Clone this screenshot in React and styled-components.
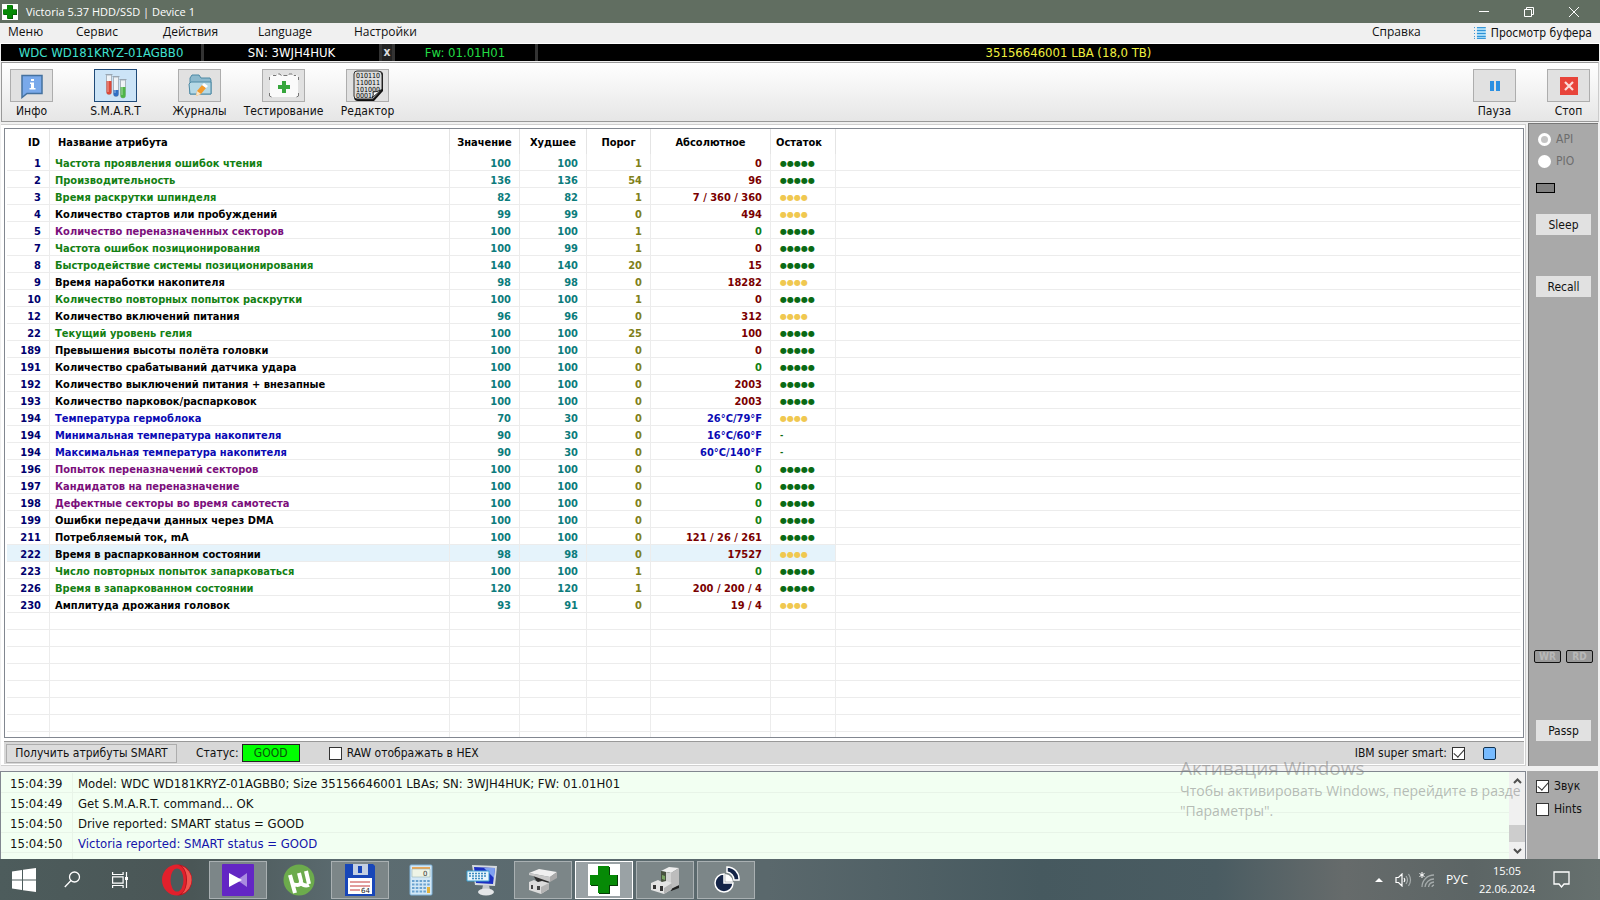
import React, { useState } from 'react'
import styled, { createGlobalStyle } from 'styled-components'

const GlobalStyle = createGlobalStyle`
  * {
    box-sizing: border-box;
  }

  html, body, #root {
    height: 100%;
    margin: 0;
  }

  body, button, input {
    font-family: "DejaVu Sans Condensed", "DejaVu Sans", sans-serif;
    font-size: 12px;
    color: #111;
  }

  body {
    background: #f0f0f0;
    overflow: hidden;
  }

  button {
    padding: 0;
    white-space: nowrap;
  }
`

const systemFont = '"Open Sans", "Noto Sans", sans-serif'

// Window frame
const Desktop = styled.div`
  position: relative;
  height: 100vh;
  display: flex;
  flex-direction: column;
`

const TitleBar = styled.header`
  height: 23px;
  flex: none;
  display: flex;
  align-items: center;
  padding: 0 4px 0 2px;
  background: #616e61;
  color: #fff;
  font-family: ${systemFont};
`

const Title = styled.h1`
  flex: 1;
  margin: 0;
  padding-left: 8px;
  font-size: 11px;
  font-weight: 400;
`

const WindowButton = styled.button`
  width: 45px;
  height: 23px;
  display: flex;
  align-items: center;
  justify-content: center;
  border: 0;
  background: none;
`

const MenuBar = styled.nav`
  height: 21px;
  flex: none;
  display: flex;
  align-items: flex-start;
  padding: 0 8px;
  background: #f0f0f0;
  border-bottom: 1px solid #fff;
`

const MenuItem = styled.button`
  width: ${props => props.$width}px;
  height: ${props => (props.$plain ? 20 : 17)}px;
  flex: none;
  border: 0;
  background: none;
  text-align: left;
  font-family: ${props => (props.$plain ? 'inherit' : systemFont)};
  display: flex;
  align-items: center;
  gap: 5px;
`

const Spacer = styled.div`
  flex: 1;
`

// Drive passport line
const DriveBar = styled.div`
  height: 17px;
  flex: none;
  display: flex;
  margin: 0 1px;
  background: #000;
`

const DriveCell = styled.div`
  width: ${props => (props.$width ? `${props.$width}px` : 'auto')};
  flex: ${props => (props.$width ? 'none' : 1)};
  border-right: ${props => (props.$last ? 0 : 3)}px solid #333;
  color: ${props => props.$color};
  font-size: 13px;
  line-height: 18px;
  text-align: center;
  white-space: nowrap;
`

const ClearSerial = styled.button`
  width: 100%;
  height: 17px;
  display: block;
  border: 0;
  background: #222;
  color: #ddd;
  font-weight: 700;
  line-height: 17px;
`

// Toolbar
const Toolbar = styled.div`
  height: 60px;
  flex: none;
  display: flex;
  margin: 1px 1px 0;
  padding: 6px 8px 0;
  border: 1px solid #999;
  border-right-color: #ccc;
  background: linear-gradient(#fff, #e6e6e6);
`

const ToolGroup = styled.div`
  display: flex;
  gap: ${props => props.$gap}px;
`

const ToolItem = styled.label`
  width: 43px;
  display: flex;
  flex-direction: column;
  align-items: center;
  white-space: nowrap;
  line-height: 18px;
`

const ToolButton = styled.button`
  width: 43px;
  height: 33px;
  flex: none;
  display: flex;
  align-items: center;
  justify-content: center;
  border: 1px solid ${props => (props.$active ? '#1f4a78' : '#adadad')};
  background: ${props => (props.$active ? '#cce4f7' : '#e1e1e1')};
`

// Main area
const Main = styled.main`
  flex: 1;
  min-height: 0;
  display: flex;
  padding-right: 2px;
`

const Content = styled.section`
  flex: 1;
  min-width: 0;
  display: flex;
  flex-direction: column;
  margin: 2px 2px 0 1px;
  padding: 3px 1px 1px 3px;
  border: 1px solid #d0d0d0;
  border-width: 1px 1px 1px 0;
  background: #fff;
`

const TableBox = styled.div`
  flex: 1;
  min-height: 0;
  overflow: hidden;
  padding: 0 2px;
  border: 1px solid #828790;
  background: #fff;
`

const AttrTable = styled.table`
  width: 100%;
  table-layout: fixed;
  border-collapse: separate;
  border-spacing: 0;
  font-size: 11px;
  font-weight: 700;
`

const headPadding = {
  right: '2px 9px 0 0',
  left: '2px 0 0 8px',
  near: '2px 0 0 5px',
}

const HeadCell = styled.th`
  height: 25px;
  padding: ${props => headPadding[props.$align] || '2px 0 0'};
  border-right: 1px solid ${props => (props.$blank ? 'transparent' : '#e4e4e4')};
  color: #000;
  text-align: ${props => (props.$align === 'near' ? 'left' : props.$align || 'center')};
`

const Row = styled.tr`
  td:not(:last-child) {
    background: ${props => (props.$selected ? '#e5f3fb' : 'transparent')};
  }
`

const Cell = styled.td`
  height: 17px;
  padding: ${props => (props.$left ? '3px 0 0 5px' : '3px 8px 0 0')};
  border-right: 1px solid ${props => (props.$blank ? 'transparent' : '#ececec')};
  border-bottom: 1px solid #ececec;
  color: ${props => props.$color};
  line-height: 13px;
  text-align: ${props => (props.$left ? 'left' : 'right')};
  white-space: nowrap;
`

const HealthCell = styled(Cell)`
  padding: 2px 0 0 9px;
  text-align: left;
  font-family: "DejaVu Sans", sans-serif;
  font-size: 8px;
`

const SmartBar = styled.div`
  height: 23px;
  flex: none;
  display: flex;
  align-items: center;
  margin-top: 3px;
  padding: 0 28px 0 2px;
  border-top: 1px solid #999;
  background: #d8d8d8;
`

const GetButton = styled.button`
  width: 171px;
  height: 19px;
  margin-right: 19px;
  border: 1px solid #adadad;
  background: #dcdcdc;
`

const Status = styled.output`
  width: 58px;
  height: 18px;
  margin: 0 29px 0 3px;
  border: 1px solid #222;
  background: #0f0;
  color: #0a500a;
  line-height: 17px;
  text-align: center;
`

const CheckLabel = styled.label`
  display: flex;
  align-items: center;
  gap: 5px;
  color: #111;
  white-space: nowrap;
`

const CheckBox = styled.input.attrs({ type: 'checkbox' })`
  appearance: none;
  width: 13px;
  height: 13px;
  flex: none;
  display: grid;
  place-items: center;
  margin: 0;
  border: 1px solid #333;
  background: #fff;

  &:checked::before {
    content: '';
    width: 9px;
    height: 5px;
    border: solid #333;
    border-width: 0 0 1px 1px;
    transform: translateY(-1px) rotate(-48deg);
  }
`

const BlueLamp = styled.span`
  width: 13px;
  height: 13px;
  margin-left: 18px;
  border: 1px solid #12324f;
  border-radius: 2px;
  background: #77bbff;
`

// Right side panel
const Side = styled.aside`
  width: 70px;
  flex: none;
  display: flex;
  flex-direction: column;
  align-items: flex-start;
  margin-top: 1px;
  padding: 4px 6px 25px 7px;
  border-left: 1px solid #777;
  border-top: 1px solid #777;
  background: #a9a9a9;
`

const RadioLabel = styled.label`
  height: 22px;
  display: flex;
  align-items: center;
  gap: 5px;
  padding-left: 2px;
  color: #6d6d6d;
`

const Radio = styled.input.attrs({ type: 'radio' })`
  appearance: none;
  width: 13px;
  height: 13px;
  margin: 0;
  border: 3px solid #fff;
  border-radius: 50%;
  background: #fff;

  &:checked {
    background: #c4c4c4;
  }
`

const Led = styled.span`
  width: 19px;
  height: 10px;
  margin: 11px 0 21px;
  border: 1px solid #000;
  background: #808080;
`

const SideButton = styled.button`
  width: 55px;
  height: 21px;
  flex: none;
  margin-bottom: ${props => props.$gap || 0}px;
  border: 0;
  background: #e1e1e1;
`

const PortLamps = styled.div`
  display: flex;
  gap: 5px;
  margin: auto 0 57px -2px;
`

const PortLamp = styled.span`
  width: 27px;
  height: 13px;
  border: 1px solid #111;
  border-radius: 2px;
  background: #999;
  color: #b8b8b8;
  font-size: 10px;
  font-weight: 700;
  line-height: 12px;
  text-align: center;
`

// Log
const LogArea = styled.section`
  height: 88px;
  flex: none;
  display: flex;
  margin-top: 5px;
  padding-right: 2px;
`

const LogBox = styled.div`
  flex: 1;
  min-width: 0;
  display: flex;
  margin-right: 1px;
  border: 1px solid #828790;
  border-bottom: 0;
  background: #f2fff2;
`

const LogTable = styled.table`
  flex: 1;
  display: block;
  height: 87px;
  overflow: hidden;
  padding-top: 1px;
  border-spacing: 0;
  font-size: 13px;

  tbody {
    display: block;
  }

  tr {
    display: flex;
    height: 20px;
    border-bottom: 1px solid #e8f4e8;
  }
`

const LogTime = styled.td`
  width: 72px;
  padding: 2px 0 0 9px;
  border-right: 1px solid #e8f4e8;
  line-height: 18px;
`

const LogText = styled.td`
  flex: 1;
  padding: 2px 0 0 5px;
  color: ${props => props.$color || '#111'};
  line-height: 18px;
`

const ScrollBar = styled.div`
  width: 16px;
  display: flex;
  flex-direction: column;
  background: #f0f0f0;
`

const ScrollButton = styled.button`
  height: 17px;
  display: grid;
  place-items: center;
  border: 0;
  background: none;
`

const ScrollThumb = styled.div`
  height: 17px;
  margin-top: auto;
  background: #cdcdcd;
`

const LogSide = styled.div`
  width: 71px;
  display: flex;
  flex-direction: column;
  gap: 9px;
  padding: 8px 0 0 9px;
  background: #a9a9a9;
`

const Watermark = styled.div`
  position: absolute;
  right: 75px;
  bottom: 79px;
  width: 345px;
  overflow: hidden;
  color: rgba(120, 120, 120, 0.5);
  font-family: ${systemFont};
  font-size: 14px;
  line-height: 20px;
  white-space: nowrap;
  pointer-events: none;
`

const WatermarkTitle = styled.div`
  font-size: 19px;
  line-height: 26px;
`

// Taskbar
const TaskBar = styled.footer`
  height: 41px;
  flex: none;
  display: flex;
  align-items: center;
  background: linear-gradient(90deg, #4d5c5c, #4a5656 12%, #5c6c71 22%, #5a686c 48%, #46595f 65%, #4a5c62 76%, #666b6b 84%, #5c6565 92%, #66706e);
  color: #fff;
  font-family: ${systemFont};
`

const SystemButton = styled.button`
  width: ${props => props.$width}px;
  height: 41px;
  display: grid;
  place-items: center;
  border: 0;
  background: none;
  color: #fff;
  font-family: inherit;
  font-size: ${props => (props.$small ? 11 : 12)}px;
  line-height: 18px;
  white-space: pre;
`

const Apps = styled.div`
  flex: 1;
  display: flex;
  gap: 3px;
  padding-left: 4px;
`

const AppButton = styled.button`
  width: 58px;
  height: 38px;
  display: grid;
  place-items: center;
  border: 1px solid ${props => (props.$active ? '#fff' : props.$open ? '#a9b0b2' : 'transparent')};
  background: ${props => (props.$active ? '#9aa2a5' : props.$open ? '#7c8688' : 'none')};
`

const tools = [
  { id: 'info', label: 'Инфо' },
  { id: 'smart', label: 'S.M.A.R.T' },
  { id: 'logs', label: 'Журналы' },
  { id: 'test', label: 'Тестирование' },
  { id: 'editor', label: 'Редактор' },
]

const colors = {
  green: '#138013',
  black: '#000',
  purple: '#7b0f7b',
  blue: '#0a0ab4',
  red: '#7a0000',
}

// id, name, name color, value, worst, threshold, raw, raw color, health
const attributes = [
  [1, 'Частота проявления ошибок чтения', 'green', 100, 100, 1, '0', 'red', 5],
  [2, 'Производительность', 'green', 136, 136, 54, '96', 'red', 5],
  [3, 'Время раскрутки шпинделя', 'green', 82, 82, 1, '7 / 360 / 360', 'red', 4],
  [4, 'Количество стартов или пробуждений', 'black', 99, 99, 0, '494', 'red', 4],
  [5, 'Количество переназначенных секторов', 'purple', 100, 100, 1, '0', 'green', 5],
  [7, 'Частота ошибок позиционирования', 'green', 100, 99, 1, '0', 'red', 5],
  [8, 'Быстродействие системы позиционирования', 'green', 140, 140, 20, '15', 'red', 5],
  [9, 'Время наработки накопителя', 'black', 98, 98, 0, '18282', 'red', 4],
  [10, 'Количество повторных попыток раскрутки', 'green', 100, 100, 1, '0', 'red', 5],
  [12, 'Количество включений питания', 'black', 96, 96, 0, '312', 'red', 4],
  [22, 'Текущий уровень гелия', 'green', 100, 100, 25, '100', 'red', 5],
  [189, 'Превышения высоты полёта головки', 'black', 100, 100, 0, '0', 'red', 5],
  [191, 'Количество срабатываний датчика удара', 'black', 100, 100, 0, '0', 'green', 5],
  [192, 'Количество выключений питания + внезапные', 'black', 100, 100, 0, '2003', 'red', 5],
  [193, 'Количество парковок/распарковок', 'black', 100, 100, 0, '2003', 'red', 5],
  [194, 'Температура гермоблока', 'blue', 70, 30, 0, '26°C/79°F', 'blue', 4],
  [194, 'Минимальная температура накопителя', 'blue', 90, 30, 0, '16°C/60°F', 'blue', 0],
  [194, 'Максимальная температура накопителя', 'blue', 90, 30, 0, '60°C/140°F', 'blue', 0],
  [196, 'Попыток переназначений секторов', 'purple', 100, 100, 0, '0', 'green', 5],
  [197, 'Кандидатов на переназначение', 'purple', 100, 100, 0, '0', 'green', 5],
  [198, 'Дефектные секторы во время самотеста', 'purple', 100, 100, 0, '0', 'green', 5],
  [199, 'Ошибки передачи данных через DMA', 'black', 100, 100, 0, '0', 'green', 5],
  [211, 'Потребляемый ток, mA', 'black', 100, 100, 0, '121 / 26 / 261', 'red', 5],
  [222, 'Время в распаркованном состоянии', 'black', 98, 98, 0, '17527', 'red', 4],
  [223, 'Число повторных попыток запарковаться', 'green', 100, 100, 1, '0', 'green', 5],
  [226, 'Время в запаркованном состоянии', 'green', 120, 120, 1, '200 / 200 / 4', 'red', 5],
  [230, 'Амплитуда дрожания головок', 'black', 93, 91, 0, '19 / 4', 'red', 4],
]

const log = [
  { time: '15:04:39', text: 'Model: WDC WD181KRYZ-01AGBB0; Size 35156646001 LBAs; SN: 3WJH4HUK; FW: 01.01H01' },
  { time: '15:04:49', text: 'Get S.M.A.R.T. command... OK' },
  { time: '15:04:50', text: 'Drive reported: SMART status = GOOD' },
  { time: '15:04:50', text: 'Victoria reported: SMART status = GOOD', color: '#1414aa' },
]

const CrossIcon = ({ size }) => (
  <svg width={size} height={size} viewBox="0 0 32 32">
    <path fill="#fff" d="M0 0h32v32H0z" />
    <path fill="#063b06" d="M11 3h11v8h8v11h-8v8H11v-8H3V11h8z" />
    <path fill="#068a06" d="M10 2h11v9h8v10h-8v8H10v-8H2V11h8z" />
  </svg>
)

const ToolIcon = ({ id }) => {
  switch (id) {
    case 'info':
      return (
        <svg width="24" height="26" viewBox="0 0 24 26">
          <path d="M2 2.500h20v18H7l-5 4z" fill="#79a9ea" stroke="#44719f" strokeWidth="1.500" />
          <path d="M11 6h3v2h-3zM10 9.500h4V15h1.500v1.500H9.500V15H11v-4h-1z" fill="#fff" />
        </svg>
      )
    case 'smart':
      return (
        <svg width="24" height="28" viewBox="0 0 24 28">
          <path d="M2.500 3v17a2.500 2.500 0 005 0V3z" fill="#eef2f6" stroke="#a9b4be" />
          <path d="M2.500 9h5v11a2.500 2.500 0 01-5 0z" fill="#dc4a3a" />
          <path d="M9.500 5v17a2.500 2.500 0 005 0V5z" fill="#eef2f6" stroke="#a9b4be" />
          <path d="M9.500 18h5v4a2.500 2.500 0 01-5 0z" fill="#2f6fc4" />
          <path d="M16.500 8v15.500a2.500 2.500 0 005 0V8z" fill="#eef2f6" stroke="#a9b4be" />
          <path d="M16.500 15h5v8.500a2.500 2.500 0 01-5 0z" fill="#4fb548" />
          <path d="M1.500 2.500h7M8.500 4.500h7M15.500 7.500h7" stroke="#99a6b2" />
          <path d="M4 5v15M11 7v14M18 10v13" stroke="#fff" strokeOpacity="0.500" />
        </svg>
      )
    case 'logs':
      return (
        <svg width="26" height="26" viewBox="0 0 26 26">
          <path d="M3 21V5l2-3h7l2 3h9l1 2v14z" fill="#8db9cd" stroke="#4d89a4" />
          <path d="M3 21l-1-10 2-2h20v12z" fill="#b6d9e6" stroke="#4d89a4" />
          <path d="M9 23l1-5 5-6 4 3-5 6z" fill="#f39a2c" />
          <path d="M9 23l1-5 4 3z" fill="#f7e5c8" />
          <path d="M15 12l2-2 4 3-2 2z" fill="#fff" />
        </svg>
      )
    case 'test':
      return (
        <svg width="32" height="28" viewBox="0 0 32 28">
          <path d="M2 5q0-2 2-2h3l1-1h3l1 1h9l1-1h3l1 1h2q2 0 2 2v18q0 2-2 2H4q-2 0-2-2z" fill="#fafafa" />
          <path d="M5 3.500h3l1-1.500h3l1 1.500h7L21 2h3l1 1.500h3" stroke="#777" strokeDasharray="4 2" fill="none" />
          <path d="M1.500 8V5M30.500 8V5M1.500 21v3l2 1M30.500 21v3l-2 1" stroke="#777" fill="none" />
          <path d="M14 9h4v4h4v4h-4v4h-4v-4h-4v-4h4z" fill="#36a63c" />
        </svg>
      )
    default:
      return (
        <svg width="32" height="32" viewBox="0 0 32 32">
          <path d="M5 1h22q4 0 4 4v16l-9 10H6q-4 0-4-4V4z" fill="#111" />
          <path d="M5 1h21q4 0 4 4v14l-9 10H5q-3 0-3-3V4q0-3 3-3z" fill="#dcdcdc" stroke="#333" />
          <g fontFamily="DejaVu Sans Condensed" fontSize="7" fill="#000">
            <text x="4" y="8">010110</text>
            <text x="4" y="15">110011</text>
            <text x="4" y="22">101000</text>
            <text x="4" y="28">0001</text>
          </g>
          <path d="M20 28q2-3 1-6 4 0 8-2z" fill="#fff" stroke="#222" />
        </svg>
      )
  }
}

const PauseIcon = () => (
  <svg width="12" height="12" viewBox="0 0 12 12">
    <path d="M1 1h4v10H1zM7 1h4v10H7z" fill="#2b90e2" />
  </svg>
)

const StopIcon = () => (
  <svg width="18" height="18" viewBox="0 0 18 18">
    <path d="M0 0h18v18H0z" fill="#e8443a" />
    <path d="M5 5l8 8M13 5l-8 8" stroke="#fbdcd8" strokeWidth="2.200" />
  </svg>
)

const BufferIcon = () => (
  <svg width="12" height="12" viewBox="0 0 12 12">
    <path d="M3 0h9v12H3z" fill="#a8dcf8" />
    <path d="M0 .5h1M0 3.500h1M0 6.500h1M0 9.500h1M0 11.500h1M3 .5h9M3 3.500h9M3 6.500h9M3 9.500h9M3 11.500h9" stroke="#2a8fd4" />
  </svg>
)

const WindowIcon = ({ kind }) => (
  <svg width="12" height="12" viewBox="0 0 12 12" fill="none" stroke="#fff">
    {kind === 'min' && <path d="M1 5.500h10" />}
    {kind === 'max' && <path d="M1.500 3.500h7v7h-7zM3.500 3.500v-2h7v7h-2" />}
    {kind === 'close' && <path d="M1 1l10 10M11 1L1 11" />}
  </svg>
)

const Chevron = ({ down }) => (
  <svg width="9" height="6" viewBox="0 0 9 6" fill="none" stroke="#505050" strokeWidth="2">
    <path d={down ? 'M1 1l3.500 3.500L8 1' : 'M1 5l3.500-3.500L8 5'} />
  </svg>
)

const StartIcon = () => (
  <svg width="24" height="24" viewBox="0 0 24 24" fill="#fff">
    <path d="M0 3.500L10 2v9.500H0zM11 1.800L24 0v11.500H11zM0 12.500h10V22L0 20.500zM11 12.500h13V24l-13-1.800z" />
  </svg>
)

const SearchIcon = () => (
  <svg width="17" height="17" viewBox="0 0 17 17" fill="none" stroke="#fff" strokeWidth="1.300">
    <circle cx="10.500" cy="6" r="5" />
    <path d="M7 9.500L.8 16" />
  </svg>
)

const TaskViewIcon = () => (
  <svg width="17" height="16" viewBox="0 0 17 16" fill="none" stroke="#fff" strokeWidth="1.200">
    <path d="M.6 0v2.500h10.500V0M.6 16v-2.500h10.500V16M.6 4.800h10.500v6.400H.6zM14.500 0v16" />
    <path d="M13 5h3v3h-3z" fill="#fff" stroke="none" />
  </svg>
)

const OperaIcon = () => (
  <svg width="32" height="32" viewBox="0 0 32 32">
    <ellipse cx="16" cy="16" rx="15" ry="15.500" fill="#e2202c" />
    <path d="M16 .5a15 15.500 0 010 31q9-2 9-15.500T16 .5z" fill="#b3141f" />
    <path d="M21 2a15 15 0 010 28q5-5 5-14T21 2z" fill="#f2554f" />
    <ellipse cx="16" cy="16" rx="6.500" ry="11.500" fill="#4c5a5b" />
  </svg>
)

const PlayerIcon = () => (
  <svg width="32" height="32" viewBox="0 0 32 32">
    <rect width="32" height="32" rx="1" fill="#6326c4" />
    <path d="M25 9v14l-10-7z" fill="#a98be0" />
    <path d="M7 9v14l13-7z" fill="#fff" />
  </svg>
)

const TorrentIcon = () => (
  <svg width="32" height="32" viewBox="0 0 32 32">
    <circle cx="16" cy="16" r="15.500" fill="#6cab4c" />
    <path d="M7 11l5 18M10 20q8 3 8-3l-2-8M17 18q4 5 9 3M23 7l3 13" fill="none" stroke="#fff" strokeWidth="4" />
  </svg>
)

const FloppyIcon = () => (
  <svg width="32" height="32" viewBox="0 0 32 32">
    <path d="M1 0h28l2 2v30H1z" fill="#1846b8" />
    <path d="M9 0h15v11H9z" fill="#c3cfe2" />
    <path d="M14 2h4v7h-4z" fill="#1846b8" />
    <path d="M4 14h24v16H4z" fill="#fff" />
    <path d="M6 18h20M6 22h20M6 26h10" stroke="#c43a3a" />
    <text x="17" y="28.500" fontFamily="DejaVu Sans" fontSize="7" fill="#222">64</text>
  </svg>
)

const CalcIcon = () => (
  <svg width="24" height="32" viewBox="0 0 24 32">
    <rect x="1" y="1" width="22" height="30" rx="1" fill="#d3e8f6" stroke="#7fb2d8" />
    <path d="M3 3h18v2H3z" fill="#e8a75a" />
    <path d="M3 5h18v8H3z" fill="#eef4e6" stroke="#8aa" strokeWidth=".5" />
    <text x="14" y="12" fontFamily="DejaVu Sans" fontSize="7" fill="#333">0</text>
    <path d="M3 17h18M3 20.500h18M3 24h14M3 27.500h14" stroke="#6aa2cf" strokeWidth="2.200" strokeDasharray="2.500 1.300" />
    <path d="M18 23h3v6h-3z" fill="#e3b23c" />
  </svg>
)

const MonitorIcon = () => (
  <svg width="32" height="32" viewBox="0 0 32 32">
    <path d="M6 1l25 1-2 20-20-1z" fill="#d6dbe0" />
    <path d="M8 3l21 1-2 16-17-1z" fill="#1c2fc2" />
    <path d="M18 4l11 0-1 10z" fill="#7fa0f0" />
    <path d="M17 21h6l1 5h-8z" fill="#c4c8cc" />
    <ellipse cx="20" cy="28" rx="8" ry="3.500" fill="#e4e6e8" />
    <path d="M1 7h22v10H1z" fill="#e8f5fb" stroke="#3a9fd0" />
    <path d="M3 9.500h18M3 12h18M6 14.500h12" stroke="#3a8cc0" strokeWidth="1.500" strokeDasharray="2 1" />
  </svg>
)

const CameraIcon = () => (
  <svg width="32" height="32" viewBox="0 0 32 32">
    <path d="M6 11l17 6-4 4-9-3z" fill="#2c2c2c" />
    <path d="M2 9l10-4 18 3-7 5z" fill="#f0f0f0" />
    <path d="M2 9l21 4v5L6 12l-4-1z" fill="#c9c9c9" />
    <path d="M23 13l7-5v6l-7 4z" fill="#a9a9a9" />
    <path d="M2 18l5-2 4 2 4-1 7 2v6l-8 5-12-4z" fill="#dcdcdc" />
    <path d="M14 23l8-4v6l-8 5z" fill="#b4b4b4" />
    <path d="M4 21h2v4H4zM10 22h3v4h-3z" fill="#444" />
  </svg>
)

const DeviceIcon = () => (
  <svg width="32" height="32" viewBox="0 0 32 32">
    <path d="M22 24l8-3v3l-8 3z" fill="#222" />
    <path d="M12 7l8-4 10 1-8 5z" fill="#efefef" />
    <path d="M12 7l10 2v16l-10-3z" fill="#48523f" />
    <path d="M17 8l5 1v16l-5-2z" fill="#d2d2d2" />
    <path d="M22 9l8-5v17l-8 4z" fill="#bdbdbd" />
    <path d="M13 11l3 1v4l-3-1z" fill="#79a362" />
    <path d="M2 19l7-3 4 2 4-1 6 2v6l-8 5-13-4z" fill="#e3e3e3" />
    <path d="M15 24l8-5v6l-8 5z" fill="#b4b4b4" />
    <path d="M4 21h3v4H4zM11 22h3v5h-3z" fill="#333" />
  </svg>
)

const PieIcon = () => (
  <svg width="28" height="28" viewBox="0 0 28 28" fill="#142447" stroke="#fff" strokeWidth="1.500">
    <path d="M12 8a9 9 0 109 9h-9z" />
    <path d="M15 6V1a12 12 0 0112 13h-5a8 8 0 00-7-8z" />
    <path d="M14 9q5 1 6 6h-6z" fill="#fff" />
  </svg>
)

const apps = [
  { name: 'Opera', Icon: OperaIcon },
  { name: 'Player', Icon: PlayerIcon, open: true },
  { name: 'Torrent', Icon: TorrentIcon },
  { name: 'Commander', Icon: FloppyIcon, open: true },
  { name: 'Calculator', Icon: CalcIcon },
  { name: 'Keyboard', Icon: MonitorIcon },
  { name: 'Camera', Icon: CameraIcon, open: true },
  { name: 'Victoria', Icon: () => <CrossIcon size={32} />, open: true, active: true },
  { name: 'Device', Icon: DeviceIcon, open: true },
  { name: 'Disk usage', Icon: PieIcon, open: true },
]

const SpeakerIcon = () => (
  <svg width="17" height="14" viewBox="0 0 17 14" fill="none" stroke="#fff" strokeWidth="1.200">
    <path d="M1 4.500h2.500L7 1v12L3.500 9.500H1zM9 5q1.500 2 0 4" />
    <path d="M11 3q3 4 0 8M13.500 1q4 6 0 12" stroke="#a5abab" />
  </svg>
)

const WifiIcon = () => (
  <svg width="17" height="16" viewBox="0 0 17 16" fill="none" stroke="#a5abab" strokeWidth="1.300">
    <path d="M3 15A12 12 0 0115 3M6 15a9 9 0 019-8M9.500 15a6 6 0 015.500-5M13 15q0-1.500 2-2" />
    <path d="M3 0v6M.5 1.500l5 3M5.500 1.500l-5 3" stroke="#fff" strokeWidth="1" />
  </svg>
)

const NoticeIcon = () => (
  <svg width="17" height="17" viewBox="0 0 17 17" fill="none" stroke="#fff" strokeWidth="1.300">
    <path d="M1 1h15v12h-5l-2.500 3L6 13H1z" />
  </svg>
)

const AttributeRow = ({ item, selected }) => {
  const [id, name, color, value, worst, threshold, raw, rawColor, health] = item

  return (
    <Row $selected={selected}>
      <Cell $color="#00006e">{id}</Cell>
      <Cell $left $color={colors[color]}>{name}</Cell>
      <Cell $color="#0c7c7c">{value}</Cell>
      <Cell $color="#0c7c7c">{worst}</Cell>
      <Cell $color="#80801a">{threshold}</Cell>
      <Cell $color={colors[rawColor]}>{raw}</Cell>
      <HealthCell $color={health === 4 ? '#f0c850' : '#0a6a14'}>
        {health ? '●'.repeat(health) : '-'}
      </HealthCell>
      <Cell $blank />
    </Row>
  )
}

const AttributeTable = () => (
  <AttrTable>
    <colgroup>
      <col width="43" />
      <col width="400" />
      <col width="70" />
      <col width="67" />
      <col width="64" />
      <col width="120" />
      <col width="65" />
      <col />
    </colgroup>
    <thead>
      <tr>
        <HeadCell $align="right">ID</HeadCell>
        <HeadCell $align="left">Название атрибута</HeadCell>
        <HeadCell>Значение</HeadCell>
        <HeadCell>Худшее</HeadCell>
        <HeadCell>Порог</HeadCell>
        <HeadCell>Абсолютное</HeadCell>
        <HeadCell $align="near">Остаток</HeadCell>
        <HeadCell $blank />
      </tr>
    </thead>
    <tbody>
      {attributes.map((item, i) => (
        <AttributeRow key={i} item={item} selected={item[0] === 222} />
      ))}
      {/* empty grid lines below the data */}
      {Array.from({ length: 8 }, (_, i) => (
        <Row key={i}>
          {Array.from({ length: 8 }, (_, j) => <Cell key={j} $blank={j === 7} />)}
        </Row>
      ))}
    </tbody>
  </AttrTable>
)

export default () => {
  const [tool, setTool] = useState('smart')

  return (
    <Desktop>
      <GlobalStyle />
      <TitleBar>
        <CrossIcon size={16} />
        <Title>Victoria 5.37 HDD/SSD | Device 1</Title>
        <WindowButton aria-label="Свернуть"><WindowIcon kind="min" /></WindowButton>
        <WindowButton aria-label="Окно"><WindowIcon kind="max" /></WindowButton>
        <WindowButton aria-label="Закрыть"><WindowIcon kind="close" /></WindowButton>
      </TitleBar>

      <MenuBar>
        <MenuItem $width={68}>Меню</MenuItem>
        <MenuItem $width={87}>Сервис</MenuItem>
        <MenuItem $width={95}>Действия</MenuItem>
        <MenuItem $width={96}>Language</MenuItem>
        <MenuItem $width={96}>Настройки</MenuItem>
        <Spacer />
        <MenuItem $width={102}>Справка</MenuItem>
        <MenuItem $width={118} $plain><BufferIcon />Просмотр буфера</MenuItem>
      </MenuBar>

      <DriveBar>
        <DriveCell $width={203} $color="#40e0d0">WDC WD181KRYZ-01AGBB0</DriveCell>
        <DriveCell $width={178} $color="#fff">SN: 3WJH4HUK</DriveCell>
        <DriveCell $width={13}><ClearSerial>x</ClearSerial></DriveCell>
        <DriveCell $width={143} $color="#22dd44">Fw: 01.01H01</DriveCell>
        <DriveCell $last $color="#f0f040">35156646001 LBA (18,0 TB)</DriveCell>
      </DriveBar>

      <Toolbar>
        <ToolGroup $gap={41}>
          {tools.map(({ id, label }) => (
            <ToolItem key={id}>
              <ToolButton $active={tool === id} onClick={() => setTool(id)}>
                <ToolIcon id={id} />
              </ToolButton>
              {label}
            </ToolItem>
          ))}
        </ToolGroup>
        <Spacer />
        <ToolGroup $gap={31}>
          <ToolItem><ToolButton><PauseIcon /></ToolButton>Пауза</ToolItem>
          <ToolItem><ToolButton><StopIcon /></ToolButton>Стоп</ToolItem>
        </ToolGroup>
      </Toolbar>

      <Main>
        <Content>
          <TableBox>
            <AttributeTable />
          </TableBox>
          <SmartBar>
            <GetButton>Получить атрибуты SMART</GetButton>
            <span>Статус:</span>
            <Status>GOOD</Status>
            <CheckLabel><CheckBox />RAW отображать в HEX</CheckLabel>
            <Spacer />
            <CheckLabel>IBM super smart:<CheckBox defaultChecked /></CheckLabel>
            <BlueLamp />
          </SmartBar>
        </Content>
        <Side>
          <RadioLabel><Radio name="mode" defaultChecked disabled />API</RadioLabel>
          <RadioLabel><Radio name="mode" disabled />PIO</RadioLabel>
          <Led />
          <SideButton $gap={41}>Sleep</SideButton>
          <SideButton>Recall</SideButton>
          <PortLamps>
            <PortLamp>WR</PortLamp>
            <PortLamp>RD</PortLamp>
          </PortLamps>
          <SideButton>Passp</SideButton>
        </Side>
      </Main>

      <LogArea>
        <LogBox>
          <LogTable>
            <tbody>
              {log.map(({ time, text, color }, i) => (
                <tr key={i}>
                  <LogTime>{time}</LogTime>
                  <LogText $color={color}>{text}</LogText>
                </tr>
              ))}
              <tr>
                <LogTime />
                <LogText />
              </tr>
            </tbody>
          </LogTable>
          <ScrollBar>
            <ScrollButton aria-label="Вверх"><Chevron /></ScrollButton>
            <ScrollThumb />
            <ScrollButton aria-label="Вниз"><Chevron down /></ScrollButton>
          </ScrollBar>
        </LogBox>
        <LogSide>
          <CheckLabel><CheckBox defaultChecked />Звук</CheckLabel>
          <CheckLabel><CheckBox />Hints</CheckLabel>
        </LogSide>
      </LogArea>

      <TaskBar>
        <SystemButton $width={48} aria-label="Пуск"><StartIcon /></SystemButton>
        <SystemButton $width={48} aria-label="Поиск"><SearchIcon /></SystemButton>
        <SystemButton $width={48} aria-label="Задачи"><TaskViewIcon /></SystemButton>
        <Apps>
          {apps.map(({ name, Icon, open, active }) => (
            <AppButton key={name} aria-label={name} $open={open} $active={active}>
              <Icon />
            </AppButton>
          ))}
        </Apps>
        <SystemButton $width={24} aria-label="Значки">
          <svg width="8" height="4" viewBox="0 0 8 4"><path d="M0 4l4-4 4 4z" fill="#fff" /></svg>
        </SystemButton>
        <SystemButton $width={24} aria-label="Звук"><SpeakerIcon /></SystemButton>
        <SystemButton $width={24} aria-label="Сеть"><WifiIcon /></SystemButton>
        <SystemButton $width={36}>РУС</SystemButton>
        <SystemButton $width={64} $small>{'15:05\n22.06.2024'}</SystemButton>
        <SystemButton $width={44} aria-label="Уведомления"><NoticeIcon /></SystemButton>
        <SystemButton $width={17} aria-label="Показать рабочий стол" />
      </TaskBar>

      <Watermark>
        <WatermarkTitle>Активация Windows</WatermarkTitle>
        <div>Чтобы активировать Windows, перейдите в разде</div>
        <div>"Параметры".</div>
      </Watermark>
    </Desktop>
  )
}
